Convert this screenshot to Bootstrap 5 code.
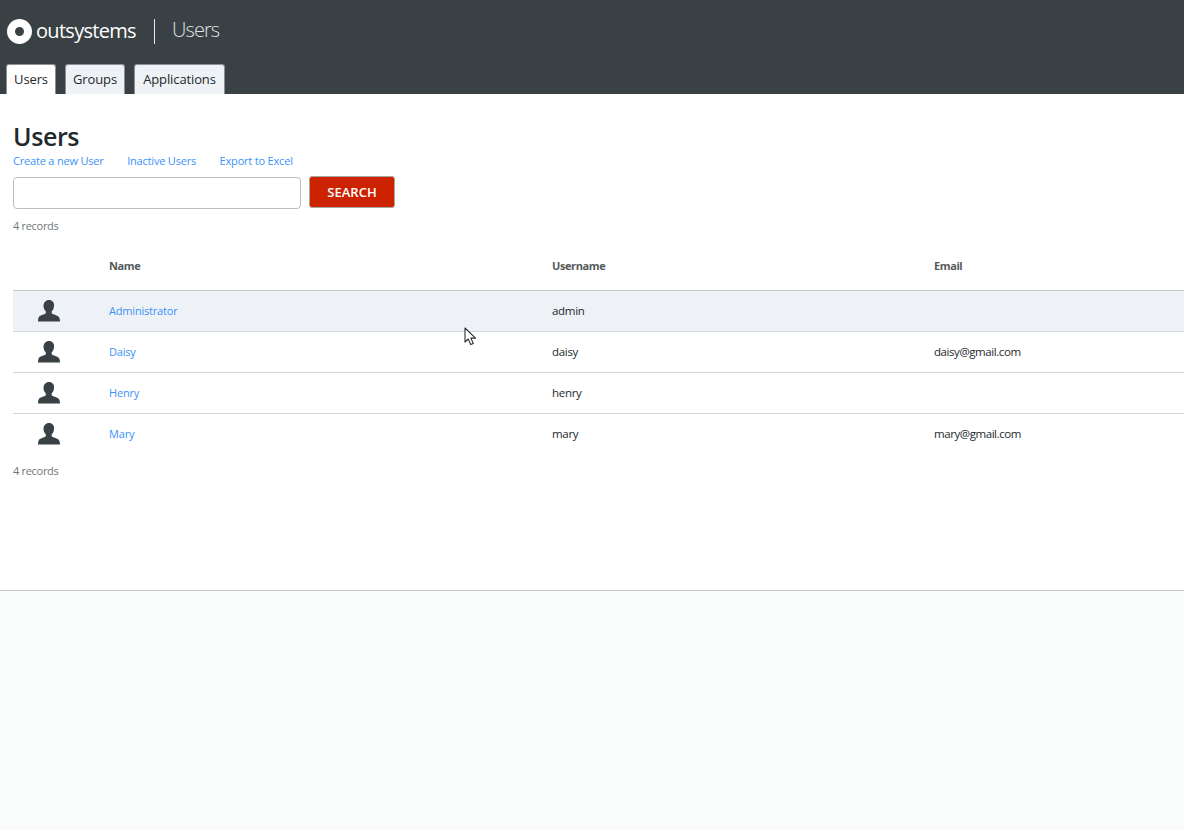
<!DOCTYPE html>
<html lang="en">
<head>
    <meta charset="UTF-8">
    <meta name="viewport" content="width=device-width, initial-scale=1.0">
    <link href="https://cdn.jsdelivr.net/npm/bootstrap@5.3.3/dist/css/bootstrap.min.css" rel="stylesheet">
    <title>Users</title>
    <style>
body {
    background-color: #fafbfb;
    font-family: "Open Sans", "Noto Sans", sans-serif;
    font-size: 12px;
    color: #22292c;
    letter-spacing: -0.3px;
    position: relative;
}
.top-header {
    background-color: #3a4144;
    height: 94px;
    padding: 19px 0 0 6px;
}
.brand-row { height: 25px; color: #fff; }
.logo-ring {
    width: 25px;
    height: 25px;
    border-radius: 50%;
    border: 8px solid #fff;
    margin: 0 4px 0 1px;
}
.brand-name { font-size: 20px; width: 118px; letter-spacing: -0.7px; padding-bottom: 2px; }
.brand-sep { width: 1px; height: 25px; background: #e8eaea; margin-right: 17px; }
.app-title { font-size: 20px; font-weight: 300; color: #dfe3e4; letter-spacing: -0.9px; padding-bottom: 3px; }
.tab-row { margin-top: 20px; gap: 9px; }
.tab-item {
    height: 30px;
    line-height: 29px;
    font-size: 13px;
    letter-spacing: -0.12px;
    text-align: center;
    color: #22292c;
    background: #eef1f5;
    border: 1px solid #8c9294;
    border-bottom: 0;
    border-radius: 3px 3px 0 0;
    text-decoration: none;
}
.tab-item.is-on { background: #fff; }
.tab-users { width: 50px; }
.tab-groups { width: 60px; }
.tab-apps { width: 91px; }
.page-body {
    background: #fff;
    height: 497px;
    padding: 27px 0 0 13px;
    border-bottom: 1px solid #c8cbcc;
}
.page-title { font-size: 25px; font-weight: 600; line-height: 30px; margin: 0; letter-spacing: -0.4px; }
.action-links { gap: 23.5px; line-height: 16px; margin-top: 2px; height: 16px; }
a.blue-link { color: #3b92fb; text-decoration: none; font-size: 11px; letter-spacing: -0.19px; }
.search-row { gap: 8px; margin-top: 7px; }
.search-box {
    width: 288px;
    height: 32px;
    margin-top: 1px;
    border: 1px solid #b9bdbf;
    border-radius: 4px;
    box-shadow: none;
}
.search-btn {
    width: 86px;
    height: 32px;
    padding: 1px 0 0;
    background: #cc2200;
    border: 1px solid #a8a8a0;
    border-radius: 3px;
    color: #fff;
    font-size: 13px;
    font-weight: 600;
}
.search-btn:hover { background: #cc2200; color: #fff; }
.rec-count { color: #6f7578; font-size: 11px; line-height: 16px; }
.rec-top { margin-top: 9px; }
.rec-bottom { margin-top: 9px; }
.users-grid { width: 100%; table-layout: fixed; margin: 8px 0 0; font-size: 11.5px; }
.users-grid th, .users-grid td { padding: 0; vertical-align: middle; }
.users-grid th { height: 48px; padding-top: 1px; font-weight: 700; color: #55595c; border-bottom: 1px solid #c8cbcc; font-size: 11px; letter-spacing: -0.4px; }
.users-grid td { height: 41px; border-bottom: 1px solid #d3d6d8; }
.users-grid tr.row-hover td { background: #eef1f5; }
.users-grid tr:last-child td { border-bottom: 0; }
.col-avatar { width: 96px; }
.col-name { width: 443px; }
.col-user { width: 382px; }
.users-grid td.cell-email { letter-spacing: -0.43px; }
.avatar-icon { display: block; margin-left: 25px; }
.mouse-arrow { position: absolute; left: 464px; top: 327px; }
    </style>
</head>
<body>

    <div class="top-header">
        <div class="brand-row d-flex align-items-center">
            <span class="logo-ring"></span>
            <span class="brand-name">outsystems</span>
            <span class="brand-sep"></span>
            <span class="app-title">Users</span>
        </div>
        <div class="tab-row d-flex">
            <a href="#" class="tab-item tab-users is-on">Users</a>
            <a href="#" class="tab-item tab-groups">Groups</a>
            <a href="#" class="tab-item tab-apps">Applications</a>
        </div>
    </div>

    <div class="page-body">
        <h1 class="page-title">Users</h1>
        <div class="action-links d-flex">
            <a href="#" class="blue-link">Create a new User</a>
            <a href="#" class="blue-link">Inactive Users</a>
            <a href="#" class="blue-link">Export to Excel</a>
        </div>
        <form class="search-row d-flex align-items-start">
            <input type="text" class="form-control search-box">
            <button type="button" class="btn search-btn">SEARCH</button>
        </form>
        <div class="rec-count rec-top">4 records</div>

        <table class="users-grid">
            <thead>
                <tr>
                    <th class="col-avatar"></th>
                    <th class="col-name">Name</th>
                    <th class="col-user">Username</th>
                    <th>Email</th>
                </tr>
            </thead>
            <tbody>
                <tr class="row-hover">
                    <td><svg class="avatar-icon" width="22" height="22" viewBox="0 0 22 22"><use href="#person"/></svg></td>
                    <td><a href="#" class="blue-link">Administrator</a></td>
                    <td>admin</td>
                    <td class="cell-email"></td>
                </tr>
                <tr>
                    <td><svg class="avatar-icon" width="22" height="22" viewBox="0 0 22 22"><use href="#person"/></svg></td>
                    <td><a href="#" class="blue-link">Daisy</a></td>
                    <td>daisy</td>
                    <td class="cell-email">daisy@gmail.com</td>
                </tr>
                <tr>
                    <td><svg class="avatar-icon" width="22" height="22" viewBox="0 0 22 22"><use href="#person"/></svg></td>
                    <td><a href="#" class="blue-link">Henry</a></td>
                    <td>henry</td>
                    <td class="cell-email"></td>
                </tr>
                <tr>
                    <td><svg class="avatar-icon" width="22" height="22" viewBox="0 0 22 22"><use href="#person"/></svg></td>
                    <td><a href="#" class="blue-link">Mary</a></td>
                    <td>mary</td>
                    <td class="cell-email">mary@gmail.com</td>
                </tr>
            </tbody>
        </table>
        <div class="rec-count rec-bottom">4 records</div>
    </div>

    <svg width="0" height="0" class="d-block">
        <symbol id="person" viewBox="0 0 22 22">
            <path fill="#3a4144" d="M11 0c-3.200 0-5.500 2.500-5.500 5.800 0 2.300 1 4.300 2.200 5.500 0.300 0.300 0.300 1.900-0.400 2.500-1 0.800-4.200 1.300-5.900 2.500C0.400 17.500 0 19.600 0 21.500h22c0-1.900-0.400-4-1.900-5.200-1.700-1.200-4.900-1.700-5.900-2.500-0.700-0.600-0.700-2.200-0.400-2.500 1.200-1.200 2.200-3.200 2.200-5.500C16.500 2.500 14.200 0 11 0z"/>
        </symbol>
    </svg>

    <svg class="mouse-arrow" width="13" height="20" viewBox="0 0 13 20">
        <path d="M1 1v14l3.300-3 2.400 5.600 2.600-1.100-2.400-5.400H11.500z" fill="#fff" stroke="#2b3033" stroke-width="1.100" stroke-linejoin="round"/>
    </svg>

    <script src="https://cdn.jsdelivr.net/npm/bootstrap@5.3.3/dist/js/bootstrap.bundle.min.js"></script>
</body>
</html>
